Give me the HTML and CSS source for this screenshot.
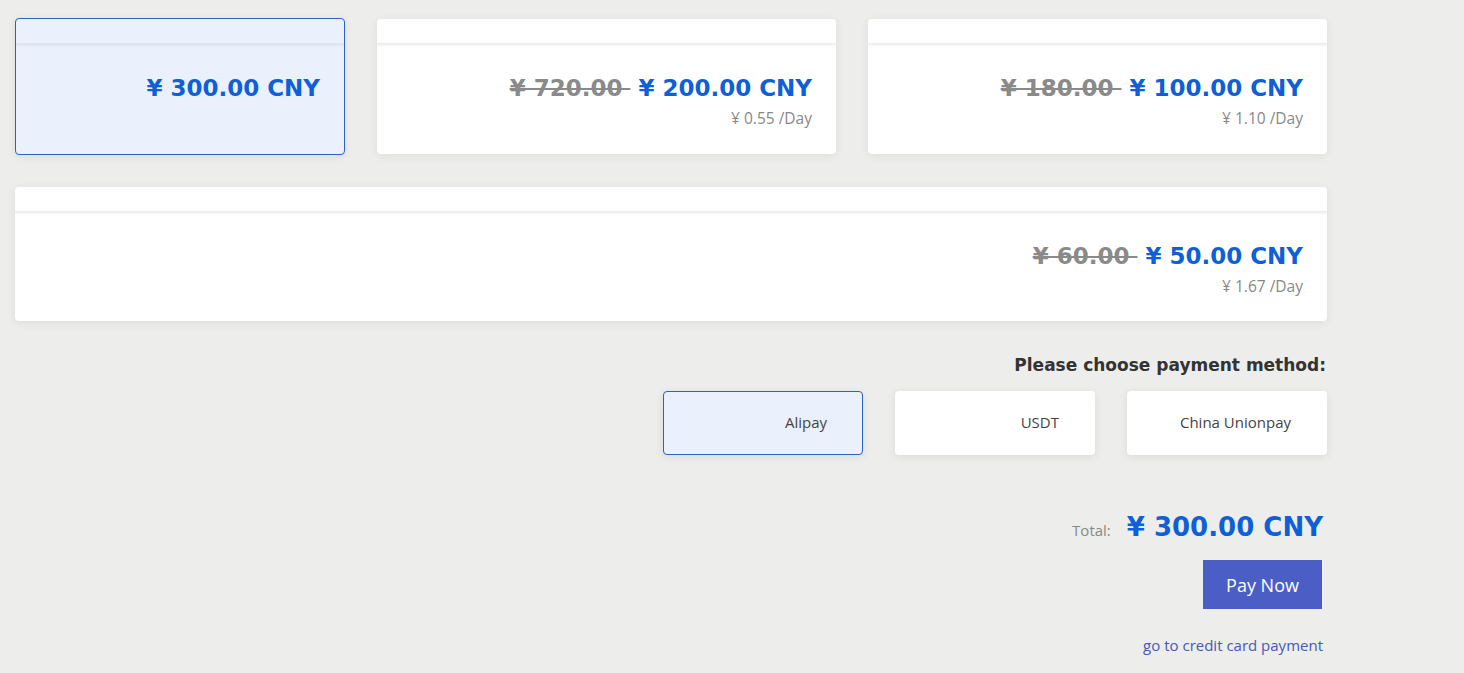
FILE: index.html
```html
<!DOCTYPE html>
<html lang="en">
<head>
<meta charset="utf-8">
<title>Choose plan</title>
<link rel="stylesheet" href="styles.css">
</head>
<body>
<div class="page">
  <div class="plans">
    <div class="plan plan-selected plan-small">
      <div class="plan-head"></div>
      <div class="plan-body">
        <div class="price-line"><span class="price">¥ 300.00 CNY</span></div>
      </div>
    </div>
    <div class="plan plan-mid">
      <div class="plan-head"></div>
      <div class="plan-body">
        <div class="price-line"><span class="old">¥ 720.00 </span><span class="price">¥ 200.00 CNY</span></div>
        <div class="per-day">¥ 0.55 /Day</div>
      </div>
    </div>
    <div class="plan plan-mid">
      <div class="plan-head"></div>
      <div class="plan-body">
        <div class="price-line"><span class="old">¥ 180.00 </span><span class="price">¥ 100.00 CNY</span></div>
        <div class="per-day">¥ 1.10 /Day</div>
      </div>
    </div>
    <div class="plan plan-wide">
      <div class="plan-head"></div>
      <div class="plan-body">
        <div class="price-line"><span class="old">¥ 60.00 </span><span class="price">¥ 50.00 CNY</span></div>
        <div class="per-day">¥ 1.67 /Day</div>
      </div>
    </div>
  </div>

  <div class="payment">
    <h2 class="pay-title">Please choose payment method:</h2>
    <div class="methods">
      <div class="method method-selected">Alipay</div>
      <div class="method">USDT</div>
      <div class="method">China Unionpay</div>
    </div>
  </div>

  <div class="checkout">
    <div class="total-row">
      <span class="total-label">Total:</span>
      <span class="total-price">¥ 300.00 CNY</span>
    </div>
    <button class="pay-btn">Pay Now</button>
    <a class="card-link" href="#">go to credit card payment</a>
  </div>
</div>
</body>
</html>
```

FILE: styles.css
```css
html, body {
  margin: 0;
  padding: 0;
  background: #ededeb;
}

body {
  font-family: "Open Sans", "Noto Sans", sans-serif;
  color: #444;
}

.page {
  width: 1312px;
  padding: 19px 0 0 15px;
}

.plans {
  display: flex;
  flex-wrap: wrap;
  column-gap: 32px;
  row-gap: 33px;
}

.plan {
  background: #fff;
  border-radius: 4px;
  box-shadow: 0 2px 10px rgba(0, 0, 0, 0.07);
  height: 135px;
  box-sizing: border-box;
  display: flex;
  flex-direction: column;
  overflow: hidden;
}

.plan-small { width: 330px; }
.plan-mid { width: 459px; }
.plan-wide { width: 1312px; height: 134px; }

.plan-selected {
  background: #eaf1fd;
  border: 1px solid #2c62c0;
  margin: -1px 0;
  height: 137px;
}

.plan-head {
  height: 24px;
  flex: none;
  box-shadow: 0 1px 3px rgba(0, 0, 0, 0.09);
  border-bottom: 1px solid #ececec;
}

.plan-selected .plan-head {
  border-bottom-color: #dfe5ef;
  height: 24px;
}

.plan-body {
  padding: 29px 24px 0 24px;
  text-align: right;
}

.price-line {
  font-family: "DejaVu Sans", Verdana, sans-serif;
  font-weight: bold;
  font-size: 23px;
  line-height: 30px;
  white-space: nowrap;
}

.price {
  color: #0f5fd8;
}

.old {
  color: #8a8a8a;
  text-decoration: line-through;
  text-decoration-thickness: 2px;
  margin-right: 8px;
}

.per-day {
  margin-top: 5px;
  font-size: 15.5px;
  line-height: 20px;
  color: #888;
}

.payment {
  display: flex;
  flex-direction: column;
  align-items: flex-end;
}

.pay-title {
  margin: 32px 1px 0 0;
  font-family: "DejaVu Sans", Verdana, sans-serif;
  font-weight: bold;
  font-size: 17px;
  line-height: 24px;
  color: #333;
}

.methods {
  display: flex;
  gap: 32px;
  margin-top: 14px;
}

.method {
  width: 200px;
  height: 64px;
  box-sizing: border-box;
  background: #fff;
  border-radius: 4px;
  box-shadow: 0 2px 10px rgba(0, 0, 0, 0.08);
  display: flex;
  align-items: center;
  justify-content: flex-end;
  padding-right: 36px;
  padding-bottom: 2px;
  font-size: 15px;
  color: #444;
}

.method-selected {
  background: #eaf1fd;
  border: 1px solid #2c62c0;
  padding-right: 35px;
}

.checkout {
  display: flex;
  flex-direction: column;
  align-items: flex-end;
  padding-right: 4px;
  margin-top: 54px;
}

.total-row {
  display: flex;
  align-items: baseline;
  gap: 16px;
  height: 36px;
}

.total-label {
  font-size: 15px;
  color: #888;
}

.total-price {
  font-family: "DejaVu Sans", Verdana, sans-serif;
  font-weight: bold;
  font-size: 26px;
  line-height: 36px;
  color: #0f5fd8;
}

.pay-btn {
  margin-top: 15px;
  margin-right: 1px;
  width: 119px;
  height: 49px;
  border: none;
  background: #4a5ec6;
  color: #fff;
  font-family: "Open Sans", "Noto Sans", sans-serif;
  font-size: 18px;
  padding-top: 2px;
  cursor: pointer;
}

.card-link {
  margin-top: 25px;
  font-size: 15px;
  line-height: 22px;
  color: #4759b8;
  text-decoration: none;
}
```
